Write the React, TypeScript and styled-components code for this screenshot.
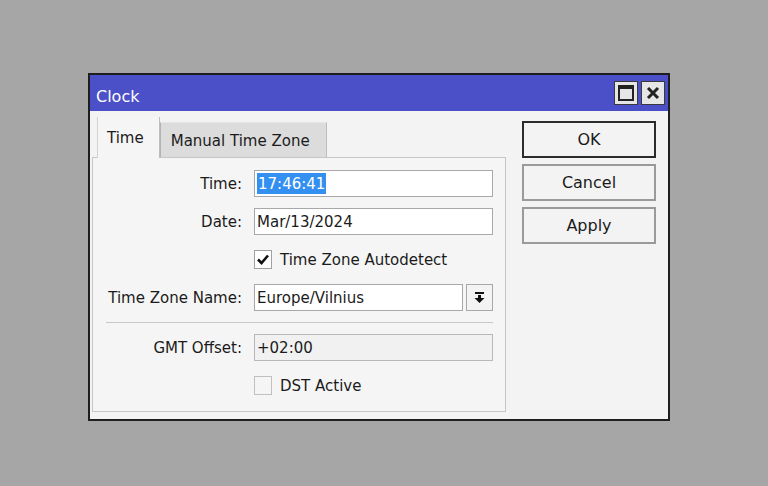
import React from "react";
import styled, { createGlobalStyle } from "styled-components";

const GlobalStyle = createGlobalStyle`
  html, body {
    margin: 0;
    padding: 0;
    background: #a6a6a6;
  }
  body {
    font-family: "DejaVu Sans", Verdana, sans-serif;
    font-size: 15px;
    color: #1b1b1b;
  }
`;

const Page = styled.div`
  width: 768px;
  height: 486px;
  box-sizing: border-box;
  padding: 73px 0 0 88px;
`;

const Window = styled.div`
  width: 582px;
  height: 348px;
  box-sizing: border-box;
  border: 2px solid #1e1e1e;
  background: #f3f3f3;
  display: flex;
  flex-direction: column;
`;

const TitleBar = styled.div`
  height: 36px;
  flex-shrink: 0;
  background: #4b50c9;
  display: flex;
  align-items: center;
  justify-content: space-between;
  padding: 0 3px 0 6px;
`;

const Title = styled.span`
  color: #ffffff;
  font-size: 16px;
  padding-top: 7px;
`;

const TitleButtons = styled.div`
  display: flex;
  gap: 3px;
`;

const TitleButton = styled.div`
  width: 24px;
  height: 24px;
  box-sizing: border-box;
  border: 1px solid #3a3a3a;
  background: #e6e6e6;
  display: flex;
  align-items: center;
  justify-content: center;
`;

const Body = styled.div`
  flex: 1;
  display: flex;
  padding: 6px 0 8px 2px;
`;

const LeftColumn = styled.div`
  width: 414px;
  display: flex;
  flex-direction: column;
`;

const TabBar = styled.div`
  display: flex;
  align-items: flex-end;
  padding-left: 5px;
  position: relative;
  z-index: 1;
`;

const Tab = styled.div<{ $active?: boolean }>`
  box-sizing: border-box;
  height: ${(p) => (p.$active ? 41 : 35)}px;
  margin-bottom: ${(p) => (p.$active ? -1 : 0)}px;
  padding: ${(p) => (p.$active ? "1px 15px 0 9px" : "2px 16px 0 10px")};
  display: flex;
  align-items: center;
  background: ${(p) => (p.$active ? "#f5f5f5" : "#dcdcdc")};
  border-left: 1px solid ${(p) => (p.$active ? "#d2d2d2" : "#b4b4b4")};
  border-right: 1px solid #bdbdbd;
  border-top: ${(p) => (p.$active ? "none" : "1px solid #e6e6e6")};
`;

const Panel = styled.div`
  flex: 1;
  box-sizing: border-box;
  border: 1px solid #c6c6c6;
  background: #f5f5f5;
  padding: 12px 12px 12px 13px;
`;

const FormGrid = styled.div`
  display: grid;
  grid-template-columns: 136px 1fr;
  grid-template-rows: 27px 27px 27px 27px 1px 27px 27px;
  column-gap: 12px;
  row-gap: 11px;
`;

const Label = styled.div`
  display: flex;
  align-items: center;
  justify-content: flex-end;
  white-space: nowrap;
`;

const Field = styled.div<{ $disabled?: boolean }>`
  box-sizing: border-box;
  height: 27px;
  flex: 1;
  border: 1px solid ${(p) => (p.$disabled ? "#b8b8b8" : "#a8a8a8")};
  background: ${(p) => (p.$disabled ? "#f1f1f1" : "#ffffff")};
  display: flex;
  align-items: center;
  padding-left: 2px;
  white-space: nowrap;
`;

const Selected = styled.span`
  background: #3390f0;
  color: #ffffff;
  padding: 2px 1px 1px 1px;
`;

const FieldRow = styled.div`
  display: flex;
  gap: 3px;
`;

const DropButton = styled.div`
  box-sizing: border-box;
  width: 27px;
  height: 27px;
  border: 1px solid #a8a8a8;
  background: #f3f3f3;
  display: flex;
  align-items: center;
  justify-content: center;
`;

const CheckRow = styled.label`
  grid-column: 2;
  display: flex;
  align-items: center;
  gap: 8px;
`;

const Box = styled.span<{ $checked?: boolean }>`
  box-sizing: border-box;
  width: 18px;
  height: 19px;
  border: 1px solid ${(p) => (p.$checked ? "#a0a0a0" : "#c0c0c0")};
  background: ${(p) => (p.$checked ? "#ffffff" : "#f5f5f5")};
  display: flex;
  align-items: center;
  justify-content: center;
`;

const Separator = styled.div`
  grid-column: 1 / span 2;
  height: 1px;
  background: #c8c8c8;
`;

const RightColumn = styled.div`
  display: flex;
  flex-direction: column;
  gap: 6px;
  padding-top: 4px;
  margin-left: 16px;
`;

const Button = styled.div<{ $default?: boolean }>`
  box-sizing: border-box;
  width: 134px;
  height: 37px;
  border: ${(p) => (p.$default ? "2px solid #2b2b2b" : "2px solid #9a9a9a")};
  background: #f3f3f3;
  display: flex;
  align-items: center;
  justify-content: center;
  font-size: 16px;
`;

const CheckIcon = () => (
  <svg width="12" height="11" viewBox="0 0 12 11">
    <path d="M1 5.5 L4.5 9 L11 1.5" fill="none" stroke="#111" strokeWidth="2.6" />
  </svg>
);

const DropIcon = () => (
  <svg width="11" height="11" viewBox="0 0 11 11">
    <rect x="1" y="0" width="9" height="2" fill="#111" />
    <rect x="4" y="3" width="3" height="3" fill="#111" />
    <path d="M0.5 6 H10.5 L5.5 11 Z" fill="#111" />
  </svg>
);

const MaxIcon = () => (
  <svg width="16" height="16" viewBox="0 0 16 16">
    <rect x="1" y="1" width="14" height="14" fill="none" stroke="#222" strokeWidth="2" />
    <rect x="1" y="1" width="14" height="3" fill="#222" />
  </svg>
);

const CloseIcon = () => (
  <svg width="14" height="14" viewBox="0 0 14 14">
    <path d="M2 2 L12 12 M12 2 L2 12" stroke="#222" strokeWidth="3" />
  </svg>
);

const App: React.FC = () => {
  return (
    <Page>
      <GlobalStyle />
      <Window>
        <TitleBar>
          <Title>Clock</Title>
          <TitleButtons>
            <TitleButton>
              <MaxIcon />
            </TitleButton>
            <TitleButton>
              <CloseIcon />
            </TitleButton>
          </TitleButtons>
        </TitleBar>
        <Body>
          <LeftColumn>
            <TabBar>
              <Tab $active>Time</Tab>
              <Tab>Manual Time Zone</Tab>
            </TabBar>
            <Panel>
              <FormGrid>
                <Label>Time:</Label>
                <Field>
                  <Selected>17:46:41</Selected>
                </Field>
                <Label>Date:</Label>
                <Field>Mar/13/2024</Field>
                <CheckRow>
                  <Box $checked>
                    <CheckIcon />
                  </Box>
                  Time Zone Autodetect
                </CheckRow>
                <Label>Time Zone Name:</Label>
                <FieldRow>
                  <Field>Europe/Vilnius</Field>
                  <DropButton>
                    <DropIcon />
                  </DropButton>
                </FieldRow>
                <Separator />
                <Label>GMT Offset:</Label>
                <Field $disabled>+02:00</Field>
                <CheckRow>
                  <Box />
                  DST Active
                </CheckRow>
              </FormGrid>
            </Panel>
          </LeftColumn>
          <RightColumn>
            <Button $default>OK</Button>
            <Button>Cancel</Button>
            <Button>Apply</Button>
          </RightColumn>
        </Body>
      </Window>
    </Page>
  );
};

export default App;
